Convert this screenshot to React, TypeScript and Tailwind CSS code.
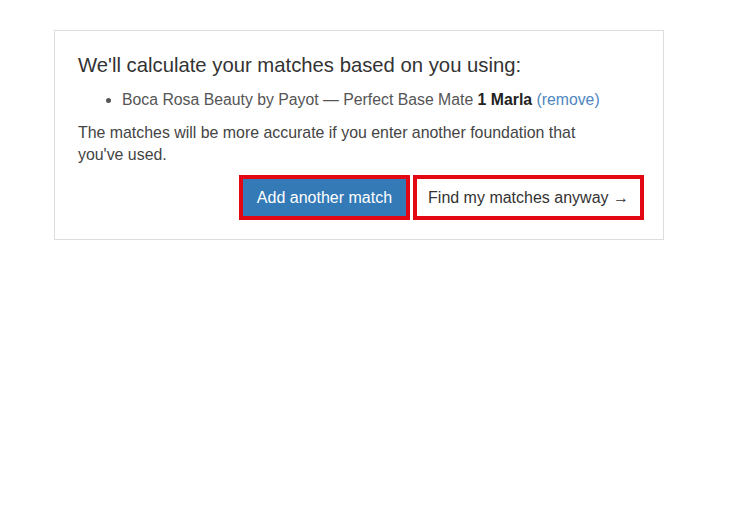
export default function App() {
  return (
    <div className="min-h-[522px] w-[750px] bg-white pt-[30px] pl-[54px]" style={{ fontFamily: '"Liberation Sans", Arial, sans-serif' }}>
      <div className="w-[610px] h-[210px] border border-[#dddddd] bg-white pl-[23px] pr-[19px] pt-[21px]">
        <h2 className="text-[20.3px] leading-[26px] text-[#333333]">We'll calculate your matches based on you using:</h2>
        <ul className="mt-[11px] list-disc pl-[44px] text-[15.8px] leading-[22px] text-[#555555]">
          <li>
            Boca Rosa Beauty by Payot — Perfect Base Mate <b className="text-[#222222]">1 Marla</b>{' '}
            <a className="text-[#4f86c0]">(remove)</a>
          </li>
        </ul>
        <p className="mt-[11px] w-[530px] text-[15.9px] leading-[22px] text-[#444444]">
          The matches will be more accurate if you enter another foundation that you've used.
        </p>
        <div className="mt-[9px] flex justify-end gap-[3px]">
          <div className="border-4 border-[#e30613]">
            <button className="block h-[37px] bg-[#337ab7] px-[14px] text-[16px] text-white">Add another match</button>
          </div>
          <div className="border-4 border-[#e30613]">
            <button className="block h-[37px] bg-white px-[11px] text-[16px] text-[#333333]">Find my matches anyway →</button>
          </div>
        </div>
      </div>
    </div>
  );
}
